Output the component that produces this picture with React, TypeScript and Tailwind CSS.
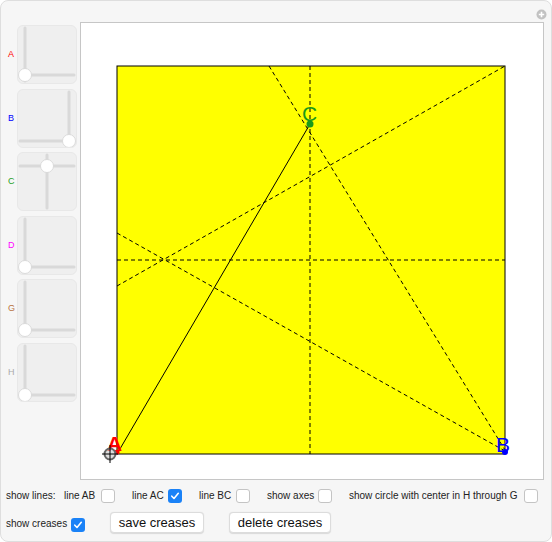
import React from "react";

type S = { label: string; color: string; kx: number; ky: number };

const sliders: S[] = [
  { label: "A", color: "text-[#ff0000]", kx: 8, ky: 50 },
  { label: "B", color: "text-[#0000ff]", kx: 52, ky: 52 },
  { label: "C", color: "text-[#1fa01f]", kx: 30, ky: 14 },
  { label: "D", color: "text-[#ff00ff]", kx: 8, ky: 51 },
  { label: "G", color: "text-[#b8733f]", kx: 8, ky: 51 },
  { label: "H", color: "text-[#aaaaaa]", kx: 8, ky: 52 },
];

function Slider2D({ s }: { s: S }) {
  return (
    <div className="flex items-center h-[59px]">
      <span className={`w-[16px] pl-[7px] text-[9px] leading-none ${s.color}`}>{s.label}</span>
      <div className="w-[60px] h-[59px] rounded-[6px] bg-[#efefef] border border-[#e8e8e8]">
        <svg width="58" height="57" viewBox="1 1 58 57">
          <line x1={s.kx} y1="3" x2={s.kx} y2="56" stroke="#d9d9d9" strokeWidth="3" strokeLinecap="round" />
          <line x1="3" y1={s.ky} x2="57" y2={s.ky} stroke="#d9d9d9" strokeWidth="3" strokeLinecap="round" />
          <circle cx={s.kx} cy={s.ky} r="6.5" fill="#ffffff" stroke="#d4d4d4" strokeWidth="0.8" />
        </svg>
      </div>
    </div>
  );
}

function Check({ on }: { on?: boolean }) {
  return on ? (
    <span className="w-[14px] h-[14px] rounded-[3px] bg-[#1a82f7] flex items-center justify-center shrink-0">
      <svg width="10" height="10" viewBox="0 0 10 10">
        <path d="M1.8 5.2 L4 7.5 L8.3 2.3" fill="none" stroke="#fff" strokeWidth="1.6" strokeLinecap="round" strokeLinejoin="round" />
      </svg>
    </span>
  ) : (
    <span className="w-[14px] h-[14px] rounded-[3px] bg-white border border-[#c4c4c4] shrink-0" />
  );
}

export default function App() {
  const dash = "4 3";
  return (
    <div className="w-[552px] h-[542px] bg-[#f6f6f6] border border-[#dedede] rounded-[8px] relative flex flex-col text-[#222]" style={{ fontFamily: '"Liberation Sans", Arial, sans-serif' }}>
      <svg className="absolute left-[535px] top-[8px]" width="11" height="11" viewBox="0 0 11 11">
        <circle cx="5.5" cy="5.5" r="5" fill="#c2c2c2" />
        <path d="M5.5 2.8 V8.2 M2.8 5.5 H8.2" stroke="#fff" strokeWidth="1.6" />
      </svg>
      <div className="flex pt-[21px] h-[479px]">
        <div className="w-[79px] flex flex-col gap-[4.6px] pt-[3px]">
          {sliders.map((s) => (
            <Slider2D key={s.label} s={s} />
          ))}
        </div>
        <div className="w-[464px] h-[458px] bg-white border border-[#c6c6c6]">
          <svg width="462" height="456" viewBox="81 23 462 456">
            <rect x="117" y="66" width="388" height="388" fill="#ffff00" stroke="#000" strokeWidth="1" />
            <line x1="310" y1="66" x2="310" y2="454" stroke="#000" strokeDasharray={dash} />
            <line x1="117" y1="260" x2="505" y2="260" stroke="#000" strokeDasharray={dash} />
            <line x1="117" y1="286" x2="505" y2="66" stroke="#000" strokeDasharray={dash} />
            <line x1="117" y1="233" x2="505" y2="451" stroke="#000" strokeDasharray={dash} />
            <line x1="269" y1="66" x2="505" y2="450" stroke="#000" strokeDasharray={dash} />
            <line x1="117" y1="454" x2="310" y2="124" stroke="#000" strokeWidth="1" />
            <circle cx="310" cy="124" r="3.5" fill="#1a9a1a" />
            <text x="302" y="121" fontSize="21" fill="#1a9a1a" fontFamily="Liberation Sans, Arial, sans-serif">C</text>
            <circle cx="505" cy="452" r="3" fill="#0000ff" />
            <text x="496" y="452" fontSize="21" fill="#0000ff" fontFamily="Liberation Sans, Arial, sans-serif">B</text>
            <circle cx="117" cy="452" r="2.5" fill="#ff0000" />
            <text x="107" y="451" fontSize="21" fontWeight="bold" fill="#ff0000" fontFamily="Liberation Sans, Arial, sans-serif">A</text>
            <circle cx="110" cy="454" r="5.5" fill="rgba(200,200,200,0.6)" stroke="#666" strokeWidth="2" />
            <path d="M110 445 V463 M102 454 H118" stroke="#000" strokeWidth="1" />
          </svg>
        </div>
      </div>
      <div className="flex items-center h-[16px] mt-[8px] pl-[5px] text-[10px] leading-none">
        <span className="w-[58px]">show lines:</span>
        <span className="w-[37px]">line AB</span>
        <Check />
        <span className="w-[36px] ml-[17px]">line AC</span>
        <Check on />
        <span className="w-[37px] ml-[17px]">line BC</span>
        <Check />
        <span className="w-[51px] ml-[17px]">show axes</span>
        <Check />
        <span className="w-[175px] ml-[17px]">show circle with center in H through G</span>
        <Check />
      </div>
      <div className="flex items-center h-[22px] mt-[7px] pl-[5px] text-[10px] leading-none">
        <span className="w-[65px] mt-[3px]">show creases</span>
        <span className="mt-[5px]">
          <Check on />
        </span>
        <button className="ml-[25px] w-[94px] h-[21px] bg-white border border-[#dcdcdc] rounded-[4px] text-[13px] text-[#111] shadow-[0_0.5px_1px_rgba(0,0,0,0.12)]">save creases</button>
        <button className="ml-[25px] w-[102px] h-[21px] bg-white border border-[#dcdcdc] rounded-[4px] text-[13px] text-[#111] shadow-[0_0.5px_1px_rgba(0,0,0,0.12)]">delete creases</button>
      </div>
    </div>
  );
}
